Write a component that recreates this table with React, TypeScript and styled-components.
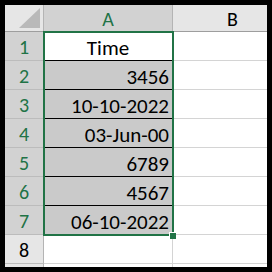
import React from "react";
import styled, { createGlobalStyle } from "styled-components";

const GlobalStyle = createGlobalStyle`
  html, body {
    margin: 0;
    padding: 0;
    background: #000;
  }
  body {
    font-family: Carlito, Calibri, "Liberation Sans", Arial, sans-serif;
  }
`;

const HEADER_H = 27;
const ROW_H = 29;
const ROWHEAD_W = 39;
const COL_A_W = 129;

const Frame = styled.div`
  width: 262px;
  height: 262px;
  border: 5px solid #000;
  background: #fff;
  overflow: hidden;
`;

const Sheet = styled.div`
  position: relative;
  display: grid;
  grid-template-columns: ${ROWHEAD_W}px ${COL_A_W}px 120px;
  grid-template-rows: ${HEADER_H}px repeat(9, ${ROW_H}px);
`;

const Corner = styled.div`
  position: relative;
  background: #e6e6e6;
  border-right: 1px solid #b4b4b4;
  border-bottom: 1px solid #9e9e9e;
  box-sizing: border-box;
  &::after {
    content: "";
    position: absolute;
    right: 3px;
    bottom: 3px;
    width: 0;
    height: 0;
    border-left: 21px solid transparent;
    border-bottom: 20px solid #b9b9b9;
  }
`;

const ColHead = styled.div<{ $selected?: boolean }>`
  box-sizing: border-box;
  display: flex;
  align-items: flex-end;
  justify-content: center;
  padding-bottom: 2px;
  font-size: 20px;
  line-height: 1;
  background: ${(p) => (p.$selected ? "#d2d2d2" : "#e6e6e6")};
  color: ${(p) => (p.$selected ? "#217346" : "#000")};
  border-right: 1px solid #b4b4b4;
  border-bottom: 1px solid #9e9e9e;
`;

const RowHead = styled.div<{ $selected?: boolean }>`
  box-sizing: border-box;
  display: flex;
  align-items: flex-end;
  justify-content: center;
  padding-bottom: 3px;
  font-size: 20px;
  line-height: 1;
  background: ${(p) => (p.$selected ? "#d2d2d2" : "#e6e6e6")};
  color: ${(p) => (p.$selected ? "#217346" : "#000")};
  border-right: 1px solid #b4b4b4;
  border-bottom: 1px solid #bcbcbc;
`;

const Cell = styled.div<{ $filled?: boolean; $boxed?: boolean; $align?: "right" | "center" }>`
  box-sizing: border-box;
  display: flex;
  align-items: flex-end;
  justify-content: ${(p) => (p.$align === "center" ? "center" : "flex-end")};
  padding: 0 3px 1px 3px;
  font-size: 21px;
  line-height: 1;
  color: #000;
  background: ${(p) => (p.$filled ? "#cacaca" : "#fff")};
  border-right: 1px solid ${(p) => (p.$boxed ? "#000" : "#d4d4d4")};
  border-bottom: 1px solid ${(p) => (p.$boxed ? "#000" : "#d4d4d4")};
`;

/* Green outline of the selected range with its fill handle */
const Selection = styled.div`
  position: absolute;
  left: ${ROWHEAD_W - 1}px;
  top: ${HEADER_H - 1}px;
  width: ${COL_A_W + 2}px;
  height: ${ROW_H * 7 + 2}px;
  box-sizing: border-box;
  border: 2px solid #217346;
  pointer-events: none;
  &::after {
    content: "";
    position: absolute;
    right: -4px;
    bottom: -5px;
    width: 6px;
    height: 6px;
    background: #217346;
    border-left: 1px solid #fff;
    border-top: 1px solid #fff;
  }
`;

const values = ["Time", "3456", "10-10-2022", "03-Jun-00", "6789", "4567", "06-10-2022"];

export default function App() {
  return (
    <>
      <GlobalStyle />
      <Frame>
        <Sheet>
          <Corner />
          <ColHead $selected>A</ColHead>
          <ColHead>B</ColHead>
          {values.map((v, i) => (
            <React.Fragment key={i}>
              <RowHead $selected>{i + 1}</RowHead>
              <Cell $boxed $filled={i > 0} $align={i === 0 ? "center" : "right"}>
                {v}
              </Cell>
              <Cell />
            </React.Fragment>
          ))}
          <RowHead>8</RowHead>
          <Cell />
          <Cell />
          <RowHead />
          <Cell />
          <Cell />
          <Selection />
        </Sheet>
      </Frame>
    </>
  );
}
